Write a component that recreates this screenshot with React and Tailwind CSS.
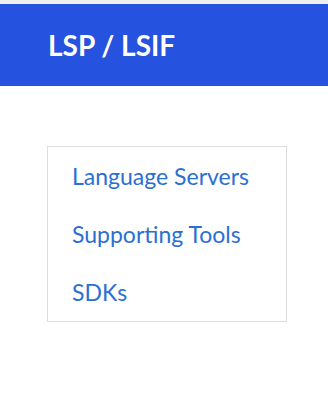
export default function App() {
  const links = ["Language Servers", "Supporting Tools", "SDKs"];
  return (
    <div className="min-h-[408px] bg-white font-['Lato',sans-serif]">
      <div className="h-1 bg-[#f0f0f0]" />
      <div className="flex h-[82px] items-center bg-[#2553e0] pl-12">
        <h1 className="text-[28px] font-bold text-white">LSP / LSIF</h1>
      </div>
      <div className="px-[47px] pt-[60px]">
        <ul className="flex w-[240px] flex-col border border-[#dddddd] pl-[24px]">
          {links.map((l) => (
            <li key={l} className="flex h-[58px] items-center">
              <a href="#" className="text-[23px] text-[#2b6fd2]">{l}</a>
            </li>
          ))}
        </ul>
      </div>
    </div>
  );
}
